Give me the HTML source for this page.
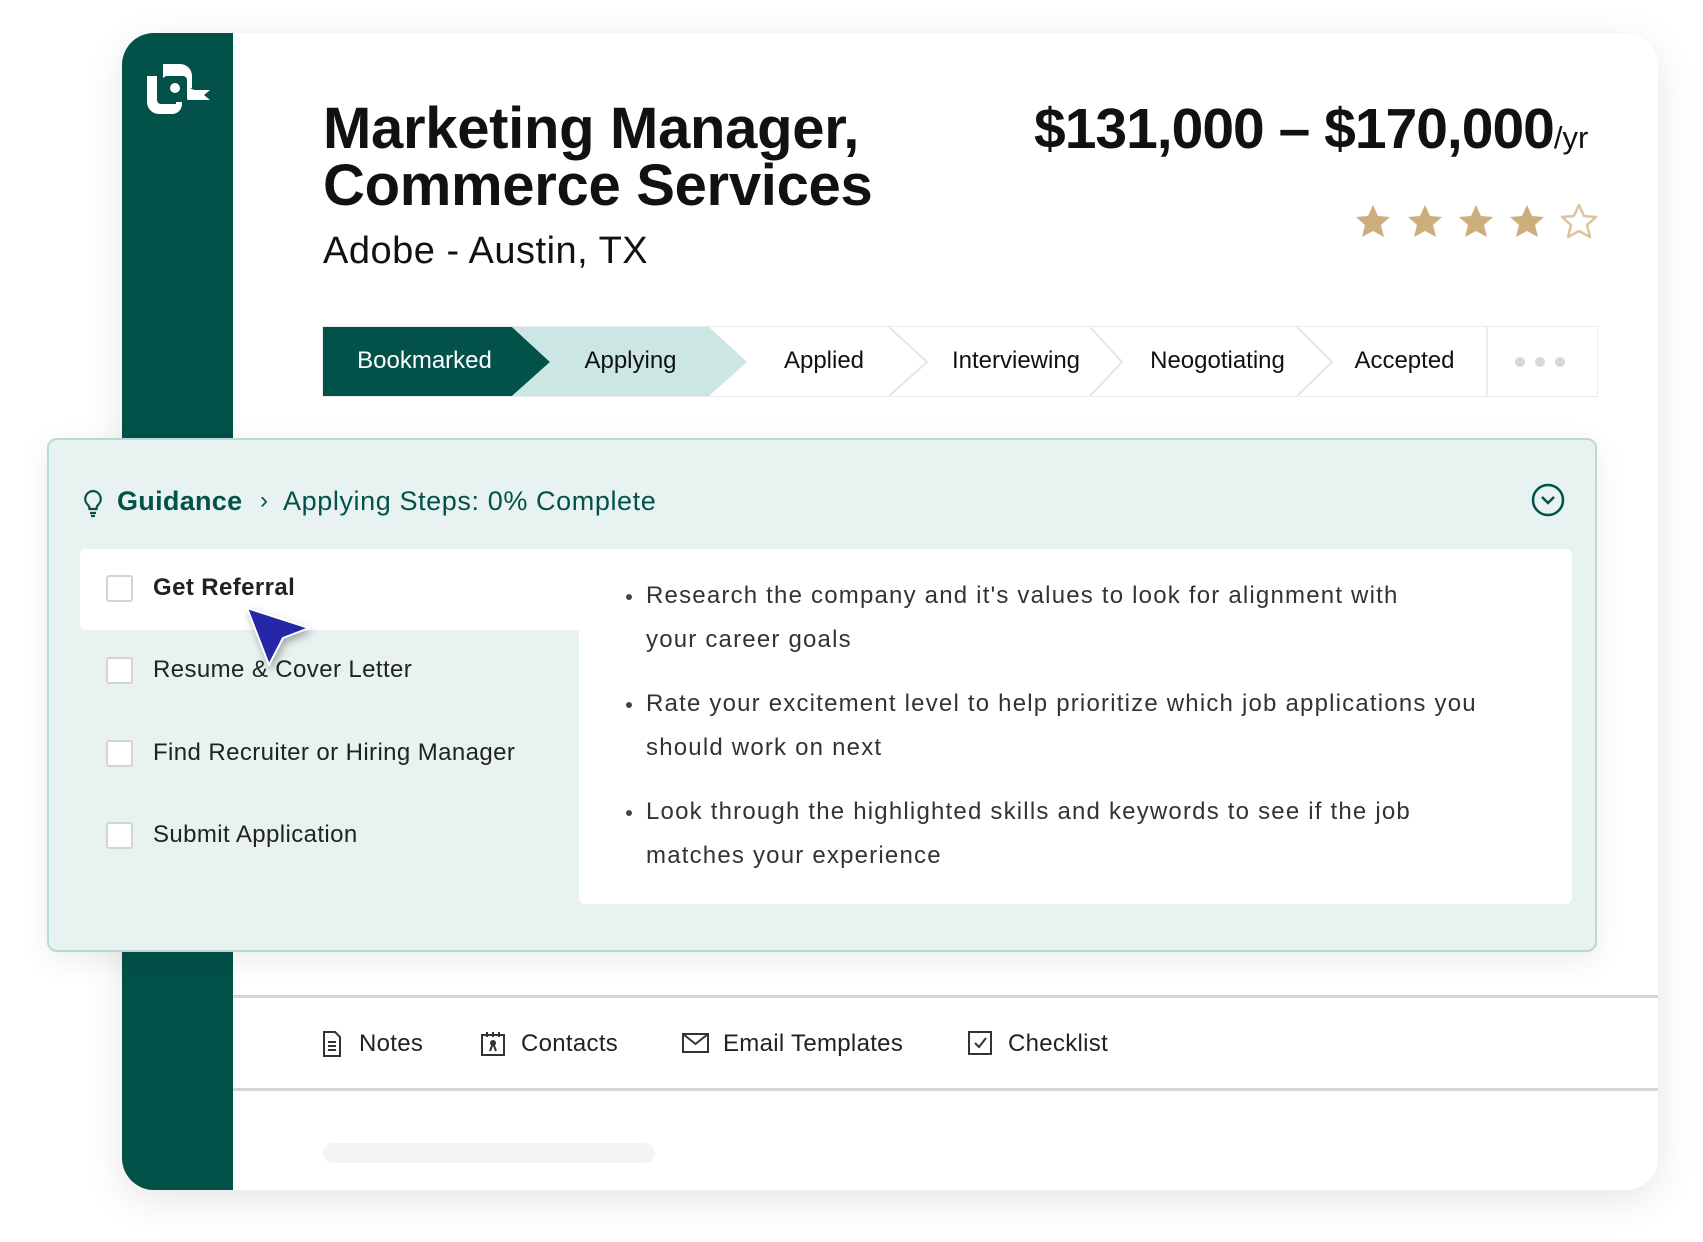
<!DOCTYPE html>
<html><head><meta charset="utf-8"><style>
*{margin:0;padding:0;box-sizing:border-box}
body{width:1703px;height:1242px;background:#fff;position:relative;overflow:hidden;font-family:"Liberation Sans",sans-serif;color:#111}
.abs{position:absolute}
.card{left:122px;top:33px;width:1536px;height:1157px;background:#fff;border-radius:32px;box-shadow:0 10px 40px rgba(0,0,0,.10);overflow:hidden}
.side{left:0;top:0;width:111px;height:100%;background:#02524a}
.t{white-space:nowrap}
.step{top:326px;height:70px;display:flex;align-items:center;justify-content:center;font-size:24px}
.panel{left:47px;top:438px;width:1550px;height:514px;background:#e8f2f1;border:2px solid #b9d9d5;border-radius:10px;box-shadow:0 8px 30px rgba(0,0,0,.08)}
.cb{width:27px;height:27px;border:2px solid #d4d4d4;background:#fff;border-radius:3px;left:106px}
.it{left:153px;font-size:24px;color:#222;letter-spacing:0.4px}
.bl{font-size:24px;color:#333;left:646px;letter-spacing:1.2px}
.dot{left:626px;width:6px;height:6px;border-radius:50%;background:#444}
.tab{font-size:24px;color:#222;top:1030px;letter-spacing:0.3px}
</style></head><body>
<div class="abs card">
 <div class="abs side"></div>
 <div class="abs" style="left:111px;top:962px;width:1425px;height:3px;background:#d6d6d6"></div>
 <div class="abs" style="left:111px;top:1055px;width:1425px;height:3px;background:#d6d6d6"></div>
 <div class="abs" style="left:201px;top:1110px;width:332px;height:20px;border-radius:10px;background:#f4f4f4"></div>
</div>
<svg class="abs" style="left:145px;top:62px" width="68" height="54" viewBox="0 0 68 54">
 <path d="M18 2h17a12 12 0 0 1 12 12v12h-2l12 6-10 4h-10v6a10 10 0 0 1-10 10H14A12 12 0 0 1 2 40V14h10v24a4 4 0 0 0 4 4h15V16H18z" fill="#fff"/>
 <rect x="18" y="14" width="24" height="26" rx="4" fill="#02524a"/>
 <circle cx="30" cy="26" r="5" fill="#fff"/>
 <path d="M45 28h20l-6 5 6 5H42z" fill="#fff"/>
</svg>
<div class="abs t" style="left:323px;top:100px;font-size:58px;font-weight:bold;line-height:57px;letter-spacing:-0.3px">Marketing Manager,<br>Commerce Services</div>
<div class="abs t" style="left:323px;top:230px;font-size:38px;letter-spacing:0.5px">Adobe - Austin, TX</div>
<div class="abs t" style="left:1034px;top:96px;font-size:57px;font-weight:bold;letter-spacing:-1px">$131,000 – $170,000<span style="font-size:31px;font-weight:normal;letter-spacing:0">/yr</span></div>
<svg class="abs" style="left:1355px;top:200px" width="250" height="46" viewBox="0 0 250 46">
 <defs><path id="s" d="M18 2l5 11 12 1-9 8 3 12-11-6-11 6 3-12-9-8 12-1z"/></defs>
 <use href="#s" x="0" y="3" fill="#cbae7b"/><use href="#s" x="52" y="3" fill="#cbae7b"/><use href="#s" x="103" y="3" fill="#cbae7b"/><use href="#s" x="154" y="3" fill="#cbae7b"/>
 <use href="#s" x="206" y="3" fill="none" stroke="#dcc59a" stroke-width="2.5" stroke-linejoin="round"/>
</svg>
<svg class="abs" style="left:322px;top:326px" width="1276" height="71" viewBox="0 0 1276 71">
 <rect x="0.5" y="0.5" width="1275" height="70" fill="#fff" stroke="#ececec"/>
 <path d="M1 1H190l38 35-38 34H1z" fill="#02524a"/>
 <path d="M190 1h197l38 35-38 34H190l38-34z" fill="#cce6e4"/>
 <path d="M567 1l38 35-38 34M768 1l32 35-32 34M975 1l35 35-35 34" fill="none" stroke="#e6e6e6" stroke-width="2"/>
 <line x1="1165" y1="1" x2="1165" y2="70" stroke="#ececec" stroke-width="2"/>
 <circle cx="1198" cy="36" r="5" fill="#d8d8d8"/><circle cx="1218" cy="36" r="5" fill="#d8d8d8"/><circle cx="1238" cy="36" r="5" fill="#d8d8d8"/>
</svg>
<div class="abs step t" style="left:322px;width:205px;color:#fff">Bookmarked</div>
<div class="abs step t" style="left:548px;width:165px">Applying</div>
<div class="abs step t" style="left:740px;width:168px">Applied</div>
<div class="abs step t" style="left:925px;width:182px">Interviewing</div>
<div class="abs step t" style="left:1120px;width:195px">Neogotiating</div>
<div class="abs step t" style="left:1322px;width:165px">Accepted</div>
<div class="abs panel"></div>
<svg class="abs" style="left:82px;top:489px" width="22" height="30" viewBox="0 0 22 30" fill="none" stroke="#02524a" stroke-width="2.2"><path d="M11 2a8 8 0 0 0-5 14c1 1 1.5 2 1.5 4h7c0-2 .5-3 1.5-4A8 8 0 0 0 11 2z"/><path d="M8 24h6M9 27h4"/></svg>
<div class="abs t" style="left:117px;top:486px;font-size:27px;font-weight:bold;color:#02524a;letter-spacing:0.3px">Guidance</div>
<div class="abs t" style="left:260px;top:487px;font-size:24px;color:#02524a">›</div>
<div class="abs t" style="left:283px;top:486px;font-size:27px;color:#02524a;letter-spacing:0.6px">Applying Steps: 0% Complete</div>
<svg class="abs" style="left:1531px;top:483px" width="34" height="34" viewBox="0 0 34 34" fill="none" stroke="#02524a" stroke-width="2.5"><circle cx="17" cy="17" r="15"/><path d="M11 14l6 6 6-6"/></svg>
<div class="abs" style="left:80px;top:549px;width:520px;height:81px;background:#fff;border-radius:6px 0 0 6px"></div>
<div class="abs" style="left:579px;top:549px;width:993px;height:355px;background:#fff;border-radius:0 6px 6px 6px"></div>
<div class="abs cb" style="top:575px"></div><div class="abs it t" style="top:574px;font-weight:bold">Get Referral</div>
<div class="abs cb" style="top:657px"></div><div class="abs it t" style="top:656px">Resume &amp; Cover Letter</div>
<div class="abs cb" style="top:740px"></div><div class="abs it t" style="top:739px">Find Recruiter or Hiring Manager</div>
<div class="abs cb" style="top:822px"></div><div class="abs it t" style="top:821px">Submit Application</div>
<div class="abs dot" style="top:594px"></div><div class="abs bl t" style="top:582px">Research the company and it's values to look for alignment with</div>
<div class="abs bl t" style="top:626px">your career goals</div>
<div class="abs dot" style="top:702px"></div><div class="abs bl t" style="top:690px">Rate your excitement level to help prioritize which job applications you</div>
<div class="abs bl t" style="top:734px">should work on next</div>
<div class="abs dot" style="top:810px"></div><div class="abs bl t" style="top:798px">Look through the highlighted skills and keywords to see if the job</div>
<div class="abs bl t" style="top:842px">matches your experience</div>
<svg class="abs" style="left:240px;top:600px;overflow:visible" width="80" height="70"><path d="M7 8L69 28 43 38 29 65z" fill="#2626a8" stroke="#fff" stroke-width="2" stroke-linejoin="round" style="filter:drop-shadow(2px 4px 4px rgba(0,0,0,.3))"/></svg>
<svg class="abs" style="left:322px;top:1031px" width="20" height="26" viewBox="0 0 20 26" fill="none" stroke="#333" stroke-width="2"><path d="M2 1h11l5 5v19H2z"/><path d="M6 11h8M6 15h8M6 19h8"/></svg>
<div class="abs tab t" style="left:359px">Notes</div>
<svg class="abs" style="left:480px;top:1031px" width="26" height="26" viewBox="0 0 26 26" fill="none" stroke="#333" stroke-width="2"><rect x="2" y="4" width="22" height="20"/><path d="M7 1v5M13 1v5M19 1v5M10 20l3-8 3 8"/><circle cx="13" cy="12" r="2"/></svg>
<div class="abs tab t" style="left:521px">Contacts</div>
<svg class="abs" style="left:682px;top:1033px" width="27" height="20" viewBox="0 0 27 20" fill="none" stroke="#333" stroke-width="2"><rect x="1" y="1" width="25" height="18"/><path d="M1 1l12.5 10L26 1"/></svg>
<div class="abs tab t" style="left:723px">Email Templates</div>
<svg class="abs" style="left:968px;top:1031px" width="24" height="24" viewBox="0 0 24 24" fill="none" stroke="#333" stroke-width="2"><rect x="1" y="1" width="22" height="22"/><path d="M7 12l4 4 7-9"/></svg>
<div class="abs tab t" style="left:1008px">Checklist</div>
</body></html>
